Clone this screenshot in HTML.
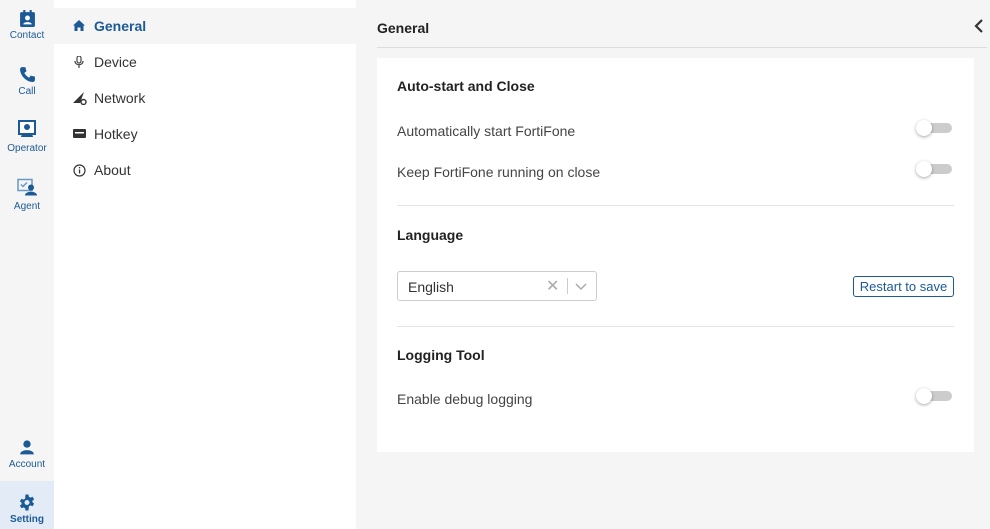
<!DOCTYPE html>
<html><head><style>
*{margin:0;padding:0;box-sizing:border-box}
body{width:990px;height:529px;overflow:hidden;background:#f5f5f5;font-family:"Liberation Sans",sans-serif;position:relative;color:#333}
.rail{position:absolute;left:0;top:0;width:54px;height:529px;background:#f5f5f5}
.ri{position:absolute;left:0;width:54px;text-align:center;font-size:10px;color:#1c5a96}
.ri svg{display:block;margin:0 auto 3px}
.nav{position:absolute;left:54px;top:0;width:302px;height:529px;background:#fff}
.ni{position:absolute;left:0;width:302px;height:36px;font-size:14px;color:#333;line-height:36px;padding-left:40px}
.ni svg{position:absolute;left:19px;top:12px}
.main{position:absolute;left:356px;top:0;right:0;bottom:0}
.card{position:absolute;left:21px;top:58px;width:597px;height:394px;background:#fff}
.t{position:absolute;left:20px;font-size:14px;font-weight:bold;color:#222}
.l{position:absolute;left:20px;font-size:14px;color:#444}
.sw{position:absolute;left:539px;width:36px;height:16px}
.sw .tr{position:absolute;left:5px;top:3px;width:31px;height:10px;border-radius:5px;background:#ccc}
.sw .k{position:absolute;left:0;top:0;width:16px;height:16px;border-radius:50%;background:#fff;box-shadow:0 1px 3px rgba(0,0,0,.35)}
.hr{position:absolute;left:20px;width:557px;height:1px;background:#e4e4e4}
</style></head><body>
<div class="rail">
<div class="ri" style="top:10px"><svg width="17" height="17" viewBox="0 0 16 16"><rect x="1" y="2" width="14" height="14" rx="1.5" fill="#1c5a96"/><rect x="4" y="0" width="2" height="3" fill="#1c5a96"/><rect x="10" y="0" width="2" height="3" fill="#1c5a96"/><circle cx="8" cy="7.5" r="2.3" fill="#fff"/><path d="M4 13.5c0-2.8 8-2.8 8 0z" fill="#fff"/></svg>Contact</div>
<div class="ri" style="top:66px"><svg width="17" height="17" viewBox="0 0 16 16"><path d="M3 1l3 0 1 4-2 1.5c1 2 2.5 3.5 4.5 4.5L11 9l4 1v3c0 1-1 2-2 2C7 15 1 9 1 3c0-1 1-2 2-2z" fill="#1c5a96"/></svg>Call</div>
<div class="ri" style="top:118px"><svg width="20" height="22" viewBox="0 0 20 20"><rect x="1" y="1" width="18" height="15" fill="#1c5a96"/><rect x="3" y="3" width="14" height="11" fill="#fff"/><circle cx="10" cy="8" r="3" fill="#1c5a96"/><path d="M4 18c0-5 12-5 12 0z" fill="#1c5a96"/></svg>Operator</div>
<div class="ri" style="top:177px"><svg width="20" height="21" viewBox="0 0 20 18"><rect x="1" y="1" width="14" height="11" fill="none" stroke="#6a98c4" stroke-width="1.5"/><path d="M4 6l2 2 4-4" stroke="#6a98c4" fill="none" stroke-width="1.5"/><circle cx="14" cy="9" r="3" fill="#1c5a96"/><path d="M8 17c0-5 12-5 12 0z" fill="#1c5a96"/></svg>Agent</div>
<div class="ri" style="top:439px"><svg width="16" height="17" viewBox="0 0 14 14"><circle cx="7" cy="4" r="3.2" fill="#1c5a96"/><path d="M1 13c0-5 12-5 12 0z" fill="#1c5a96"/></svg>Account</div>
<div class="ri" style="top:481px;height:48px;background:#e3ecf6;padding-top:13px;font-weight:bold"><svg width="16" height="17" viewBox="0 0 16 16"><path fill="#1c5a96" d="M6.5 0h3l.4 2.2 1.6.9 2.1-.8 1.5 2.6-1.7 1.4v1.4l1.7 1.4-1.5 2.6-2.1-.8-1.6.9L9.5 16h-3l-.4-2.2-1.6-.9-2.1.8L.9 11.1l1.7-1.4V8.3L.9 6.9 2.4 4.3l2.1.8 1.6-.9z"/><circle cx="8" cy="8" r="2.5" fill="#e3ecf6"/></svg>Setting</div>
</div>
<div class="nav">
<div class="ni" style="top:8px;background:#f5f5f5;color:#1c5a96;font-weight:bold"><svg width="12" height="11" viewBox="0 0 12 11"><path d="M6 0L0 5.5h1.5V11h3V7.5h3V11h3V5.5H12z" fill="#1c5a96"/></svg>General</div>
<div class="ni" style="top:44px"><svg width="12" height="12" viewBox="0 0 12 12"><rect x="4" y="0" width="4" height="7" rx="2" fill="none" stroke="#444" stroke-width="1.2"/><path d="M2 5c0 5 8 5 8 0M6 9v3" stroke="#444" fill="none" stroke-width="1.2"/></svg>Device</div>
<div class="ni" style="top:80px"><svg width="14" height="13" viewBox="0 0 14 13"><path d="M11 0L0 11h7z" fill="#333"/><circle cx="10.5" cy="10" r="2.5" fill="none" stroke="#333" stroke-width="1.4"/></svg>Network</div>
<div class="ni" style="top:116px"><svg width="13" height="11" viewBox="0 0 13 11"><rect x="0" y="1" width="13" height="9" rx="1" fill="#333"/><rect x="2" y="4" width="9" height="1.5" fill="#fff"/></svg>Hotkey</div>
<div class="ni" style="top:152px"><svg width="13" height="13" viewBox="0 0 13 13"><circle cx="6.5" cy="6.5" r="5.5" fill="none" stroke="#333" stroke-width="1.2"/><rect x="5.9" y="5.5" width="1.3" height="4" fill="#333"/><rect x="5.9" y="3" width="1.3" height="1.4" fill="#333"/></svg>About</div>
</div>
<div class="main">
<div style="position:absolute;left:21px;top:20px;font-size:14px;font-weight:bold;color:#222">General</div>
<svg style="position:absolute;left:618px;top:19px" width="10" height="14" viewBox="0 0 10 14"><path d="M8 1L2 7l6 6" stroke="#333" stroke-width="2.2" fill="none"/></svg>
<div style="position:absolute;left:21px;top:47px;width:610px;height:1px;background:#ddd"></div>
<div class="card">
<div class="t" style="top:20px">Auto-start and Close</div>
<div class="l" style="top:65px">Automatically start FortiFone</div>
<div class="sw" style="top:62px"><div class="tr"></div><div class="k"></div></div>
<div class="l" style="top:106px">Keep FortiFone running on close</div>
<div class="sw" style="top:103px"><div class="tr"></div><div class="k"></div></div>
<div class="hr" style="top:147px"></div>
<div class="t" style="top:169px">Language</div>
<div style="position:absolute;left:20px;top:213px;width:200px;height:30px;border:1px solid #ccc;border-radius:3px;font-size:14px;color:#333;padding:7px 10px">English
<span style="position:absolute;left:148px;top:4px;font-size:16px;color:#aaa">✕</span>
<span style="position:absolute;left:169px;top:6px;width:1px;height:16px;background:#ccc"></span>
<svg style="position:absolute;left:177px;top:11px" width="12" height="8" viewBox="0 0 12 8"><path d="M1 1l5 5 5-5" stroke="#aaa" stroke-width="1.5" fill="none"/></svg></div>
<div style="position:absolute;left:476px;top:218px;width:101px;height:21px;border:1px solid #1c5a96;border-radius:3px;color:#1c5a96;font-size:13px;text-align:center;line-height:19px">Restart to save</div>
<div class="hr" style="top:268px"></div>
<div class="t" style="top:289px">Logging Tool</div>
<div class="l" style="top:333px">Enable debug logging</div>
<div class="sw" style="top:330px"><div class="tr"></div><div class="k"></div></div>
</div>
</div>
</body></html>
